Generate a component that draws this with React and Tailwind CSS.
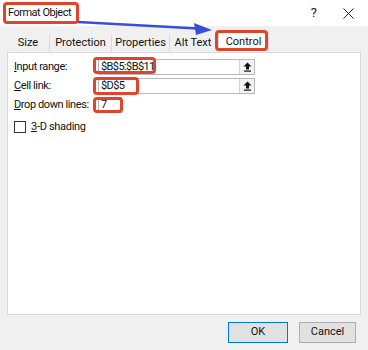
import React from "react";

const font = { fontFamily: 'Roboto, "Noto Sans", sans-serif' };

const tabs = ["Size", "Protection", "Properties", "Alt Text", "Control"];
const tabWidths = ["w-[43px]", "w-[62px]", "w-[58px]", "w-[47px]", "w-[51px]"];

function UpArrow() {
  return (
    <div className="w-[15px] h-[14px] bg-[#f3f3f3] border-l border-[#d4d4d4] flex items-center justify-center">
      <svg width="9" height="10" viewBox="0 0 9 10">
        <path d="M4.5 0.5 L8.5 4.5 L6 4.5 L6 7.5 L3 7.5 L3 4.5 L0.5 4.5 Z" fill="#111" />
        <rect x="1" y="8.5" width="7" height="1.2" fill="#111" />
      </svg>
    </div>
  );
}

function Field({ label, u, value, wide = true, button = true }) {
  return (
    <div className="flex items-center h-[19px]">
      <div className="w-[84px] whitespace-nowrap text-[11px] tracking-[-0.4px] text-[#111] leading-none">
        <span className="underline">{u}</span>
        {label}
      </div>
      <div
        className={`h-[16px] border border-[#b9b9b9] bg-white flex items-center justify-between ${
          wide ? "w-[157px]" : "w-[24px]"
        }`}
      >
        <span className="pl-[2px] text-[11px] tracking-[-0.6px] text-[#111] leading-none">{value}</span>
        {button && <UpArrow />}
      </div>
    </div>
  );
}

export default function App() {
  return (
    <div className="relative w-[368px] h-[350px] bg-[#f0f0f0] overflow-hidden" style={font}>
      {/* title bar */}
      <div className="h-[26px] bg-white flex items-center justify-between pl-[8px] pr-[14px]">
        <span className="text-[11px] tracking-[-0.5px] text-[#111]">Format Object</span>
        <div className="flex items-center gap-[26px] text-[#222]">
          <span className="text-[13px]">?</span>
          <svg width="11" height="11" viewBox="0 0 11 11">
            <path d="M0.5 0.5 L10.5 10.5 M10.5 0.5 L0.5 10.5" stroke="#222" strokeWidth="1" />
          </svg>
        </div>
      </div>

      {/* tabs */}
      <div className="flex items-end pl-[7px] h-[26px]">
        {tabs.map((t, i) => (
          <div
            key={t}
            className={`${tabWidths[i]} flex items-center justify-center text-[11px] text-[#111] ${
              t === "Control"
                ? "h-[20px] bg-white border border-[#d9d9d9] border-b-0 ml-[1px]"
                : "h-[17px] border-r border-[#d9d9d9]"
            }`}
          >
            {t}
          </div>
        ))}
      </div>

      {/* panel */}
      <div className="mx-[7px] w-[354px] h-[263px] bg-white border border-[#d9d9d9] pl-[6px] pt-[4px] flex flex-col">
        <Field u="I" label="nput range:" value="$B$5:$B$11" />
        <Field u="C" label="ell link:" value="$D$5" />
        <Field u="D" label="rop down lines:" value="7" wide={false} button={false} />
        <div className="flex items-center gap-[5px] mt-[5px]">
          <div className="w-[12px] h-[12px] border border-[#333] bg-white" />
          <span className="text-[11px] tracking-[-0.3px] text-[#111]">
            <span className="underline">3</span>-D shading
          </span>
        </div>
      </div>

      {/* buttons */}
      <div className="flex justify-end gap-[11px] pr-[12px] pt-[7px]">
        <button className="w-[60px] h-[21px] bg-[#e1e1e1] border border-[#0078d7] text-[11px] text-[#111]">
          OK
        </button>
        <button className="w-[57px] h-[21px] bg-[#e1e1e1] border border-[#adadad] text-[11px] text-[#111]">
          Cancel
        </button>
      </div>

      {/* annotations */}
      <div className="absolute left-[3px] top-[2px] w-[76px] h-[22px] border-[3px] border-[#e0442b] rounded-[4px]" />
      <div className="absolute left-[215px] top-[30px] w-[53px] h-[21px] border-[3px] border-[#e0442b] rounded-[4px]" />
      <div className="absolute left-[93px] top-[57px] w-[63px] h-[17px] border-[3px] border-[#e0442b] rounded-[4px]" />
      <div className="absolute left-[93px] top-[77px] w-[46px] h-[18px] border-[3px] border-[#e0442b] rounded-[4px]" />
      <div className="absolute left-[93px] top-[97px] w-[30px] h-[16px] border-[3px] border-[#e0442b] rounded-[4px]" />
      <svg className="absolute left-0 top-0" width="368" height="60" viewBox="0 0 368 60">
        <line x1="78" y1="22" x2="198" y2="28.5" stroke="#3a4fd8" strokeWidth="2.5" />
        <path d="M212 30 L194 23 L196 35 Z" fill="#3a4fd8" />
      </svg>
    </div>
  );
}
